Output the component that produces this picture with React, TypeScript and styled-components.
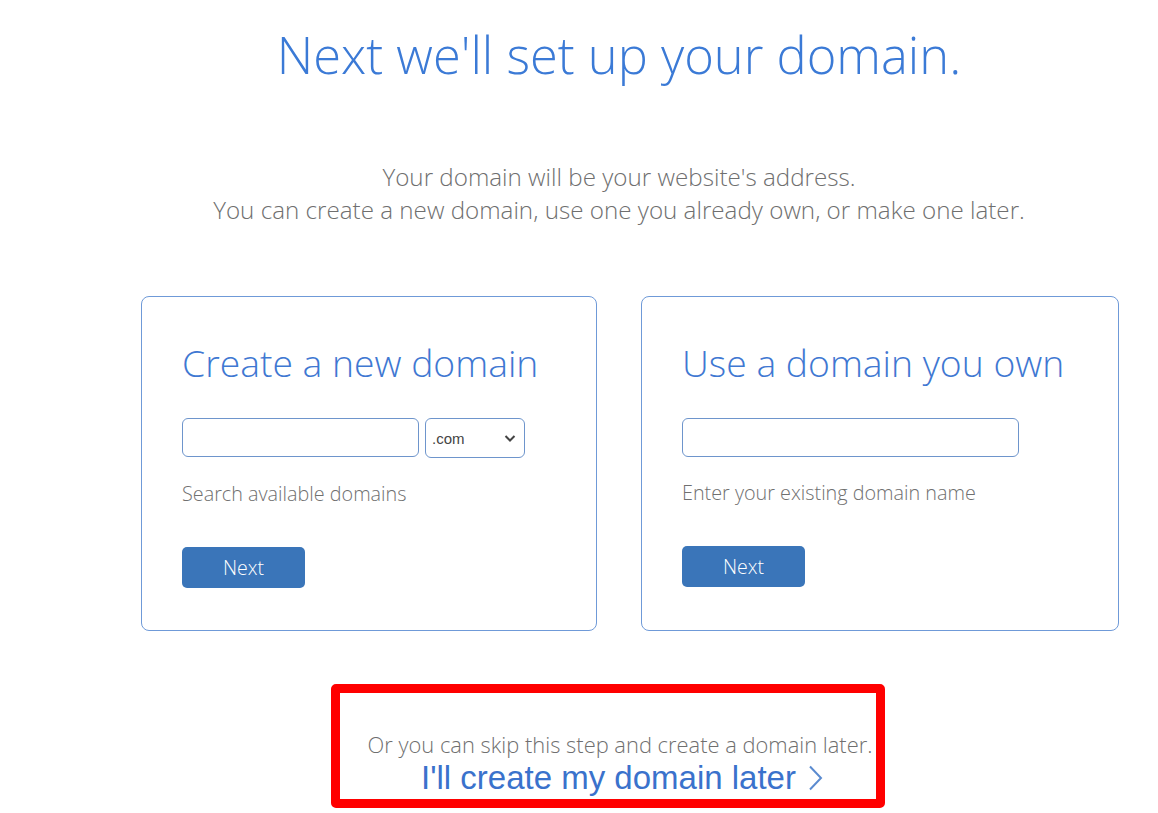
import React from "react";
import styled, { createGlobalStyle } from "styled-components";

const Global = createGlobalStyle`
  html, body { margin: 0; padding: 0; background: #fff; }
  body { font-family: "Open Sans", "Noto Sans", sans-serif; }
  * { box-sizing: border-box; }
`;

const Page = styled.main`
  width: 1158px;
  padding-left: 80px;
  display: flex;
  flex-direction: column;
  align-items: center;
`;

const Title = styled.h1`
  margin: 20px 0 0;
  font-family: "Open Sans", sans-serif;
  font-weight: 300;
  font-size: 50.6px;
  line-height: 70px;
  color: #3b7ad6;
  letter-spacing: 0;
`;

const Intro = styled.p`
  margin: 70px 0 0;
  font-family: "Open Sans", sans-serif;
  font-weight: 300;
  font-size: 24.2px;
  line-height: 33px;
  color: #6f6f6f;
  text-align: center;
  white-space: nowrap;
`;

const Cards = styled.div`
  align-self: flex-start;
  margin: 70px 0 0 61px;
  display: grid;
  grid-template-columns: 456px 478px;
  gap: 44px;
`;

const Card = styled.section`
  height: 335px;
  border: 1px solid #6f9ad8;
  border-radius: 8px;
  padding: 40px 40px 0 40px;
  display: flex;
  flex-direction: column;
  align-items: flex-start;
`;

const CardTitle = styled.h2`
  margin: 0;
  font-family: "Open Sans", sans-serif;
  font-weight: 300;
  font-size: 37.3px;
  line-height: 52px;
  color: #3f78d2;
  white-space: nowrap;
`;

const FieldRow = styled.div`
  margin-top: 29px;
  display: flex;
  gap: 6px;
`;

const TextInput = styled.input<{ $w: number }>`
  width: ${(p) => p.$w}px;
  height: 39px;
  border: 1px solid #6e95cc;
  border-radius: 6px;
  padding: 0 10px;
  font-size: 16px;
  outline: none;
  background: #fff;
`;

const SelectWrap = styled.div`
  position: relative;
  width: 100px;
  height: 40px;
`;

const Select = styled.select`
  appearance: none;
  width: 100%;
  height: 100%;
  border: 1px solid #6e95cc;
  border-radius: 6px;
  padding: 0 0 0 6px;
  font-family: "Liberation Sans", Arial, sans-serif;
  font-size: 15px;
  color: #444;
  background: #fff;
  outline: none;
`;

const Caret = styled.svg`
  position: absolute;
  right: 9px;
  top: 16px;
  pointer-events: none;
`;

const Helper = styled.p`
  margin: 24px 0 0;
  font-family: "Open Sans", sans-serif;
  font-weight: 300;
  font-size: 19.8px;
  line-height: 24px;
  color: #707070;
  white-space: nowrap;
`;

const NextButton = styled.button`
  margin-top: 41px;
  width: 123px;
  height: 41px;
  border: none;
  border-radius: 5px;
  background: #3a75b9;
  color: #fff;
  font-family: "Open Sans", sans-serif;
  font-weight: 300;
  font-size: 19.5px;
  cursor: pointer;
`;

const Highlight = styled.div`
  align-self: flex-start;
  margin: 53px 0 0 251px;
  width: 554px;
  height: 124px;
  border: 9px solid #ff0000;
  border-radius: 5px;
  padding: 38px 0 0 24px;
  display: flex;
  flex-direction: column;
  align-items: center;
`;

const SkipText = styled.p`
  margin: 0;
  font-family: "Open Sans", sans-serif;
  font-weight: 300;
  font-size: 21.9px;
  line-height: 28px;
  color: #6f6f6f;
  white-space: nowrap;
`;

const LaterLink = styled.a`
  margin-top: 1px;
  margin-left: 4px;
  display: flex;
  align-items: center;
  gap: 12px;
  font-family: "Liberation Sans", Arial, sans-serif;
  font-size: 33px;
  line-height: 36px;
  color: #3a72cc;
  text-decoration: none;
  white-space: nowrap;
`;

export default function App() {
  return (
    <>
      <Global />
      <Page>
        <Title>Next we'll set up your domain.</Title>
        <Intro>
          Your domain will be your website's address.
          <br />
          You can create a new domain, use one you already own, or make one later.
        </Intro>
        <Cards>
          <Card>
            <CardTitle>Create a new domain</CardTitle>
            <FieldRow>
              <TextInput $w={237} />
              <SelectWrap>
                <Select defaultValue=".com">
                  <option>.com</option>
                  <option>.net</option>
                  <option>.org</option>
                </Select>
                <Caret width="12" height="9" viewBox="0 0 12 9">
                  <path d="M1.5 2 L6 6.5 L10.5 2" fill="none" stroke="#444" strokeWidth="2" />
                </Caret>
              </SelectWrap>
            </FieldRow>
            <Helper>Search available domains</Helper>
            <NextButton>Next</NextButton>
          </Card>
          <Card>
            <CardTitle>Use a domain you own</CardTitle>
            <FieldRow>
              <TextInput $w={337} />
            </FieldRow>
            <Helper>Enter your existing domain name</Helper>
            <NextButton>Next</NextButton>
          </Card>
        </Cards>
        <Highlight>
          <SkipText>Or you can skip this step and create a domain later.</SkipText>
          <LaterLink href="#">
            I'll create my domain later
            <svg width="15" height="26" viewBox="0 0 15 26">
              <path d="M2 1.5 L13 13 L2 24.5" fill="none" stroke="#5b8bd0" strokeWidth="2" />
            </svg>
          </LaterLink>
        </Highlight>
      </Page>
    </>
  );
}
